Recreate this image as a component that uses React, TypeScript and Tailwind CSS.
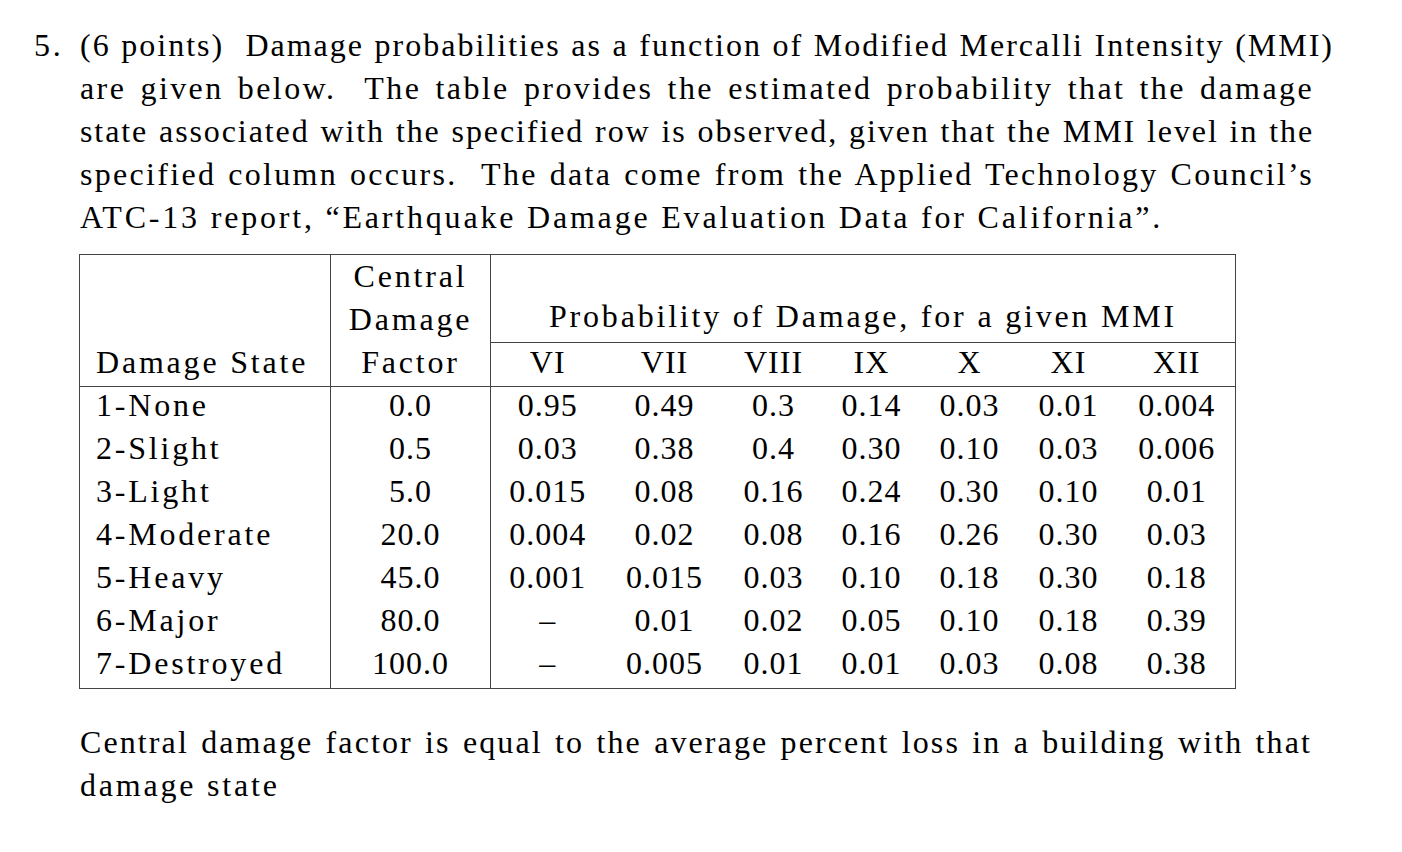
const romans = ["VI", "VII", "VIII", "IX", "X", "XI", "XII"];

const rows: { state: string; factor: string; probs: string[] }[] = [
  { state: "1-None", factor: "0.0", probs: ["0.95", "0.49", "0.3", "0.14", "0.03", "0.01", "0.004"] },
  { state: "2-Slight", factor: "0.5", probs: ["0.03", "0.38", "0.4", "0.30", "0.10", "0.03", "0.006"] },
  { state: "3-Light", factor: "5.0", probs: ["0.015", "0.08", "0.16", "0.24", "0.30", "0.10", "0.01"] },
  { state: "4-Moderate", factor: "20.0", probs: ["0.004", "0.02", "0.08", "0.16", "0.26", "0.30", "0.03"] },
  { state: "5-Heavy", factor: "45.0", probs: ["0.001", "0.015", "0.03", "0.10", "0.18", "0.30", "0.18"] },
  { state: "6-Major", factor: "80.0", probs: ["–", "0.01", "0.02", "0.05", "0.10", "0.18", "0.39"] },
  { state: "7-Destroyed", factor: "100.0", probs: ["–", "0.005", "0.01", "0.01", "0.03", "0.08", "0.38"] },
];

const colWidths = [114, 120, 98, 98, 98, 100, 117];

// a justified line of fixed width, like a LaTeX paragraph line
const Line = ({ w, children }: { w: string; children: React.ReactNode }) => (
  <div className={`${w} text-justify [text-align-last:justify] whitespace-nowrap`}>{children}</div>
);

const App = () => {
  return (
    <div className="w-[1402px] h-[852px] bg-white text-black font-['Liberation_Serif',serif] text-[32px] tracking-[2.8px] leading-[43px] pt-[24px]">
      {/* Question text */}
      <div className="flex">
        <div className="w-[80px] pl-[34px]">5.</div>
        <div>
          <Line w="w-[1254px] tracking-[2px]">(6 points)&nbsp; Damage probabilities as a function of Modified Mercalli Intensity (MMI)</Line>
          <Line w="w-[1234px] tracking-[2.4px]">are given below.&nbsp; The table provides the estimated probability that the damage</Line>
          <Line w="w-[1234px] tracking-[1.9px]">state associated with the specified row is observed, given that the MMI level in the</Line>
          <Line w="w-[1234px] tracking-[2.3px]">specified column occurs.&nbsp; The data come from the Applied Technology Council’s</Line>
          <div>ATC-13 report, “Earthquake Damage Evaluation Data for California”.</div>
        </div>
      </div>

      {/* Table */}
      <table className="ml-[79px] mt-[15px] border-collapse border-[1.5px] border-[#444] table-fixed w-[1157px]">
        <colgroup>
          <col className="w-[251px]" />
          <col className="w-[160px]" />
          {colWidths.map((w, i) => (
            <col key={i} style={{ width: w }} />
          ))}
        </colgroup>
        <thead>
          <tr className="h-[88px]">
            <th rowSpan={2} className="font-normal text-left align-bottom pl-[16px] border-r-[1.5px] border-[#444] pb-[2px]">
              Damage State
            </th>
            <th rowSpan={2} className="font-normal text-center align-bottom border-r-[1.5px] border-[#444] pb-[2px]">
              <div>Central</div>
              <div>Damage</div>
              <div>Factor</div>
            </th>
            <th colSpan={7} className="font-normal text-center align-bottom border-b-[1.5px] border-[#444] pb-[4px]">
              Probability of Damage, for a given MMI
            </th>
          </tr>
          <tr className="h-[43px] border-b-[1.5px] border-[#444]">
            {romans.map((r) => (
              <th key={r} className="font-normal text-center p-0 pb-[5px] leading-[38px] tracking-[1px]">
                {r}
              </th>
            ))}
          </tr>
        </thead>
        <tbody>
          {rows.map((row) => (
            <tr key={row.state} className="h-[43px]">
              <td className="pl-[16px] pb-[6px] leading-[37px] border-r-[1.5px] border-[#444]">{row.state}</td>
              <td className="text-center pb-[6px] leading-[37px] border-r-[1.5px] border-[#444] tracking-[1px]">{row.factor}</td>
              {row.probs.map((p, i) => (
                <td key={i} className="text-center p-0 pb-[6px] leading-[37px] tracking-[1px]">
                  {p}
                </td>
              ))}
            </tr>
          ))}
        </tbody>
      </table>

      {/* Note */}
      <div className="pl-[80px] mt-[32px]">
        <Line w="w-[1232px] tracking-[2.1px]">Central damage factor is equal to the average percent loss in a building with that</Line>
        <div>damage state</div>
      </div>
    </div>
  );
};

export default App;
